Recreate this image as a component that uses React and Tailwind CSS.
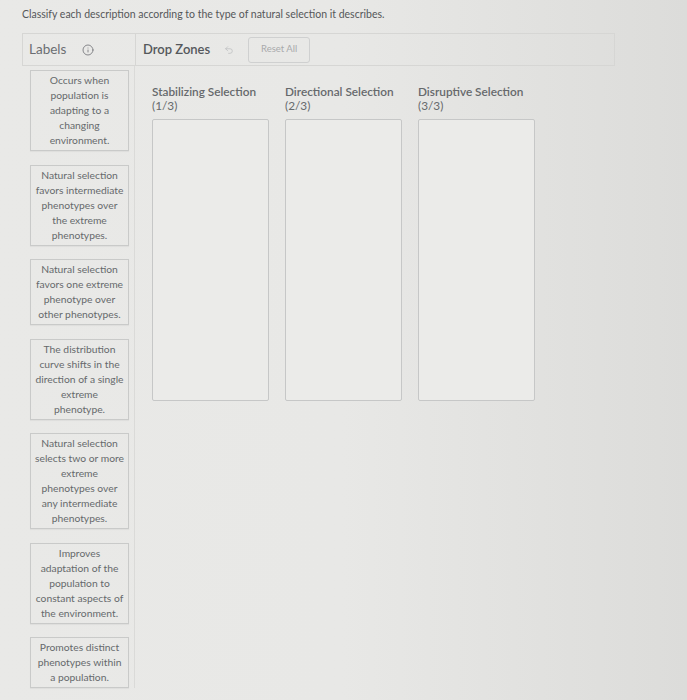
import { Info, Undo2 } from 'lucide-react'

const labels = [
  ['Occurs when', 'population is', 'adapting to a', 'changing', 'environment.'],
  ['Natural selection', 'favors intermediate', 'phenotypes over', 'the extreme', 'phenotypes.'],
  ['Natural selection', 'favors one extreme', 'phenotype over', 'other phenotypes.'],
  ['The distribution', 'curve shifts in the', 'direction of a single', 'extreme', 'phenotype.'],
  ['Natural selection', 'selects two or more', 'extreme', 'phenotypes over', 'any intermediate', 'phenotypes.'],
  ['Improves', 'adaptation of the', 'population to', 'constant aspects of', 'the environment.'],
  ['Promotes distinct', 'phenotypes within', 'a population.'],
]

const zones = [
  { name: 'Stabilizing Selection', count: '(1/3)' },
  { name: 'Directional Selection', count: '(2/3)' },
  { name: 'Disruptive Selection', count: '(3/3)' },
]

export default function App() {
  return (
    <div
      className="w-[687px] h-[700px] overflow-hidden bg-gradient-to-r from-[#e9e9e7] via-[#e8e8e6] to-[#dcdcda] text-[#5f6163]"
      style={{ fontFamily: 'Lato, "Open Sans", Arial, sans-serif' }}
    >
      <p className="pl-[22px] pt-[8px] text-[10.5px] leading-[13px] text-[#555759]">
        Classify each description according to the type of natural selection it describes.
      </p>

      <div className="ml-[22px] mt-[12px] w-[593px]">
        {/* Header row */}
        <div className="flex h-[33px] border border-[#d6d6d4]">
          <div className="flex w-[113px] items-center gap-[16px] border-r border-[#d6d6d4] pl-[6px]">
            <span className="text-[13.5px] text-[#6b6e72]">Labels</span>
            <Info className="h-[12px] w-[12px] text-[#7a7c80]" strokeWidth={1.8} />
          </div>
          <div className="flex items-center pl-[7px]">
            <span className="text-[13px] font-semibold text-[#55585c]">Drop Zones</span>
            <Undo2 className="ml-[14px] h-[10px] w-[10px] text-[#b5b7b9]" strokeWidth={1.5} />
            <div className="ml-[14px] flex h-[26px] w-[62px] items-center justify-center rounded-[3px] border border-[#cfd0d0] text-[9.5px] text-[#a8aaac]">
              Reset All
            </div>
          </div>
        </div>

        {/* Body */}
        <div className="flex">
          <div className="flex w-[113px] flex-col gap-[13.5px] border-r border-[#dadad8] pl-[8px] pr-[6px] pt-[4px]">
            {labels.map((lines, i) => (
              <div
                key={i}
                className="w-[99px] border border-[#c9cac9] py-[2px] text-center text-[10.3px] leading-[15px] text-[#66696c] shadow-[0_1px_1px_rgba(0,0,0,0.04)]"
              >
                {lines.map((l, j) => (
                  <div key={j} className="whitespace-nowrap">{l}</div>
                ))}
              </div>
            ))}
          </div>

          <div className="flex gap-[16px] pl-[17px] pt-[19px]">
            {zones.map((z) => (
              <div key={z.name} className="flex w-[117px] flex-col">
                <div className="h-[34px] text-[11.8px] font-semibold leading-[14px] text-[#66696c]">
                  <div className="whitespace-nowrap">{z.name}</div>
                  <div className="font-normal">{z.count}</div>
                </div>
                <div className="h-[282px] rounded-[2px] border border-[#c6c7c7] bg-[#ebebe9]" />
              </div>
            ))}
          </div>
        </div>
      </div>
    </div>
  )
}
